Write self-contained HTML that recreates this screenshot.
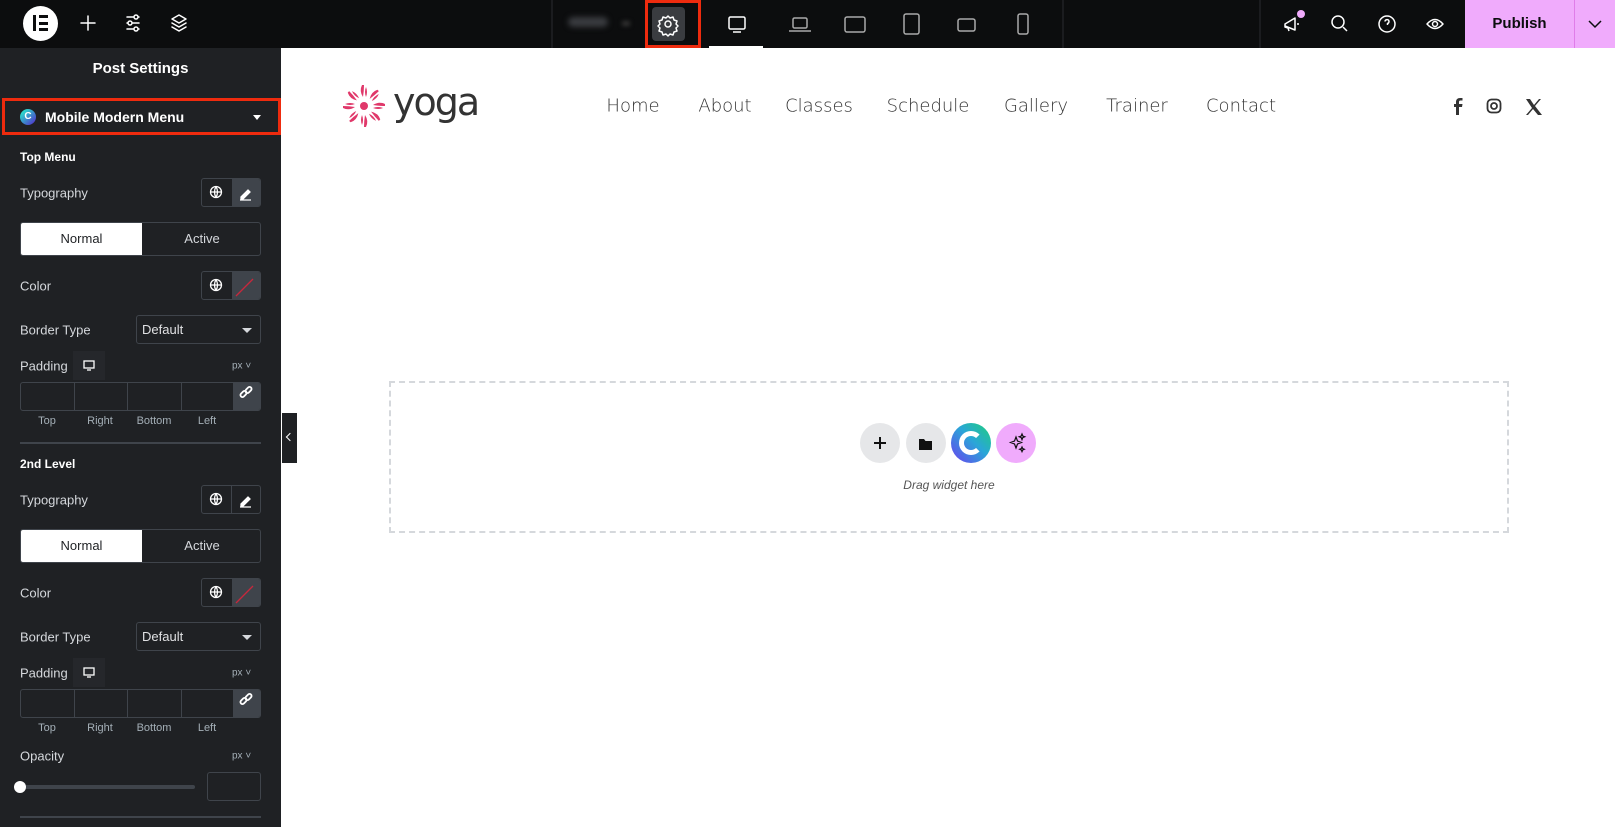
<!DOCTYPE html>
<html><head><meta charset="utf-8"><style>
*{margin:0;padding:0;box-sizing:border-box}
body{width:1615px;height:827px;overflow:hidden;background:#fff;font-family:"Liberation Sans",Arial,sans-serif;position:relative}
.a{position:absolute}
.top{left:0;top:0;width:1615px;height:48px;background:#0c0d0e}
.side{left:0;top:48px;width:281px;height:779px;background:#1f2124}
.t{color:#d5d8dc;font-size:13px;position:absolute;transform:translateY(-50%)}
.b{font-weight:bold;color:#fff}
.grp{position:absolute;left:201px;width:60px;height:29px;border:1px solid #3f444b;border-radius:3px;overflow:hidden}
.grp .r{position:absolute;left:30px;top:0;width:30px;height:100%;background:#3f444b}
.tabs{position:absolute;left:20px;width:241px;height:34px;border:1px solid #3f444b;border-radius:3px;overflow:hidden;font-size:13px;color:#d5d8dc}
.tabs .n{position:absolute;left:0;top:0;width:121px;height:100%;background:#fff;color:#1f2124;text-align:center;line-height:32px}
.tabs .ac{position:absolute;left:121px;top:0;width:120px;text-align:center;line-height:32px}
.sel{position:absolute;left:136px;width:125px;height:29px;border:1px solid #3f444b;border-radius:3px;color:#e0e1e3;font-size:13px;line-height:27px;padding-left:5px}
.sel:after{content:"";position:absolute;right:8px;top:12px;border:5px solid transparent;border-top:5px solid #d5d8dc;border-bottom:0}
.inp{position:absolute;left:20px;width:241px;height:29px;border:1px solid #3f444b;border-radius:3px;overflow:hidden}
.inp i{position:absolute;top:0;height:100%;border-left:1px solid #3f444b}
.inp .lk{position:absolute;left:212px;top:0;width:29px;height:100%;background:#3f444b}
.lbl{position:absolute;font-size:11px;color:#a4afb7;transform:translate(-50%,-50%)}
.sep{position:absolute;left:20px;width:241px;height:2px;background:#3f444b}
.nav{position:absolute;top:106px;transform:translate(-50%,-50%);font-family:"DejaVu Sans","Liberation Sans",sans-serif;font-weight:300;font-size:18px;color:#333}
.cb{position:absolute;top:423px;width:40px;height:40px;border-radius:50%;background:#e6e7e9}
</style></head><body>
<div class="a top"></div>
<div class="a" style="left:23px;top:6px;width:35px;height:35px;border-radius:50%;background:#fff"></div>
<div class="a" style="left:33px;top:15px;width:3px;height:16px;background:#0c0d0e"></div>
<div class="a" style="left:39px;top:15px;width:9px;height:3px;background:#0c0d0e"></div>
<div class="a" style="left:39px;top:21.5px;width:9px;height:3px;background:#0c0d0e"></div>
<div class="a" style="left:39px;top:28px;width:9px;height:3px;background:#0c0d0e"></div>
<svg class="a" style="left:0;top:0" width="1615" height="48" fill="none" stroke="#fff" stroke-width="1.5" stroke-linecap="round" stroke-linejoin="round">
<path d="M88 16v14M81 23h14"/>
<path d="M127 17h12M127 23h12M127 29h12"/><circle cx="136" cy="17" r="2" fill="#0c0d0e"/><circle cx="130" cy="23" r="2" fill="#0c0d0e"/><circle cx="136" cy="29" r="2" fill="#0c0d0e"/>
<path d="M179 15l-7 4 7 4 7-4zM172 23l7 4 7-4M172 27l7 4 7-4"/>
<line x1="552" y1="0" x2="552" y2="48" stroke="#2a2c30" stroke-width="1"/>
<line x1="1063" y1="0" x2="1063" y2="48" stroke="#2a2c30" stroke-width="1"/>
<line x1="1260" y1="0" x2="1260" y2="48" stroke="#2a2c30" stroke-width="1"/>
</svg>
<div class="a" style="left:568px;top:17px;width:40px;height:10px;border-radius:5px;background:#3a3c40;filter:blur(3px)"></div>
<div class="a" style="left:622px;top:21px;width:8px;height:5px;background:#333;filter:blur(2px)"></div>
<div class="a" style="left:645px;top:0;width:56px;height:48px;border:3px solid #ee2b0e"></div>
<div class="a" style="left:652px;top:7px;width:33px;height:34px;border-radius:4px;background:#3a3c40"></div>
<svg class="a" style="left:0;top:0" width="1615" height="48" fill="none" stroke="#fff" stroke-width="1.5" stroke-linejoin="round">
<circle cx="668" cy="24" r="3"/><path d="M668 16l2 2 3-1 1 3 3 1-1 3 2 2-2 2 1 3-3 1-1 3-3-1-2 2-2-2-3 1-1-3-3-1 1-3-2-2 2-2-1-3 3-1 1-3 3 1z"/>
<rect x="729" y="17" width="16" height="12" rx="1.5"/><path d="M733 32h8"/>
<g stroke="#aaa"><rect x="793" y="18" width="14" height="10" rx="1.5"/><path d="M789 31h22"/>
<rect x="845" y="17" width="20" height="15" rx="2"/>
<rect x="904" y="14" width="15" height="20" rx="2"/>
<rect x="958" y="19" width="17" height="12" rx="2"/>
<rect x="1018" y="14" width="10" height="20" rx="2"/></g>
<path d="M1285 24l10-6v12l-10-4zM1285 24v3l3 1 1 3M1297 24h2"/>
<circle cx="1338" cy="22" r="6"/><path d="M1343 27l4 4"/>
<circle cx="1387" cy="24" r="8"/><path d="M1385 21.5a2 2 0 1 1 2.5 2v1.5"/>
<path d="M1427 24q8-9 16 0q-8 9-16 0z"/><circle cx="1435" cy="24" r="2.5"/>
</svg>
<div class="a" style="left:709px;top:46px;width:54px;height:2px;background:#fff"></div>
<div class="a" style="left:1297px;top:10px;width:8px;height:8px;border-radius:50%;background:#f0abfc"></div>
<div class="a" style="left:1465px;top:0;width:150px;height:48px;background:#f0abfc"></div>
<div class="a" style="left:1574px;top:0;width:1px;height:48px;background:#e07de9"></div>
<div class="a" style="left:1465px;top:0;width:109px;height:48px;line-height:48px;text-align:center;font-size:15px;font-weight:bold;color:#0c0d0e">Publish</div>
<svg class="a" style="left:1575px;top:0" width="40" height="48" fill="none" stroke="#0c0d0e" stroke-width="1.5"><path d="M14 21l6 6 6-6"/></svg>

<div class="a side"></div>
<div class="a b" style="left:0;top:60px;width:281px;text-align:center;font-size:15px">Post Settings</div>
<div class="a" style="left:2px;top:98px;width:279px;height:37px;border:3px solid #ee2b0e"></div>
<div class="a" style="left:20px;top:109px;width:16px;height:16px;border-radius:50%;background:linear-gradient(135deg,#2fc,#52c);color:#fff;font-size:10px;font-weight:bold;text-align:center;line-height:16px">C</div>
<div class="t b" style="left:45px;top:117px;font-size:14px">Mobile Modern Menu</div>
<div class="a" style="left:253px;top:115px;border:4px solid transparent;border-top:5px solid #fff"></div>

<div class="t b" style="left:20px;top:157px;font-size:12px">Top Menu</div>
<div class="t" style="left:20px;top:193px">Typography</div>
<div class="grp" style="top:178px"><div class="r"></div></div>
<div class="tabs" style="top:222px"><div class="n">Normal</div><div class="ac">Active</div></div>
<div class="t" style="left:20px;top:286px">Color</div>
<div class="grp" style="top:271px"><div class="r"></div></div>
<div class="t" style="left:20px;top:330px">Border Type</div>
<div class="sel" style="top:315px">Default</div>
<div class="t" style="left:20px;top:366px">Padding</div>
<div class="a" style="left:73px;top:351px;width:32px;height:29px;background:#25272b"></div>
<div class="t" style="left:232px;top:366px;font-size:10px;color:#a4afb7">px ˅</div>
<div class="inp" style="top:382px"><i style="left:53px"></i><i style="left:106px"></i><i style="left:160px"></i><div class="lk"></div></div>
<div class="lbl" style="left:47px;top:421px">Top</div><div class="lbl" style="left:100px;top:421px">Right</div><div class="lbl" style="left:154px;top:421px">Bottom</div><div class="lbl" style="left:207px;top:421px">Left</div>
<div class="sep" style="top:442px"></div>

<div class="t b" style="left:20px;top:464px;font-size:12px">2nd Level</div>
<div class="t" style="left:20px;top:500px">Typography</div>
<div class="grp" style="top:485px"></div><div class="a" style="left:231px;top:485px;width:1px;height:29px;background:#3f444b"></div>
<div class="tabs" style="top:529px"><div class="n">Normal</div><div class="ac">Active</div></div>
<div class="t" style="left:20px;top:593px">Color</div>
<div class="grp" style="top:578px"><div class="r"></div></div>
<div class="t" style="left:20px;top:637px">Border Type</div>
<div class="sel" style="top:622px">Default</div>
<div class="t" style="left:20px;top:673px">Padding</div>
<div class="a" style="left:73px;top:658px;width:32px;height:29px;background:#25272b"></div>
<div class="t" style="left:232px;top:673px;font-size:10px;color:#a4afb7">px ˅</div>
<div class="inp" style="top:689px"><i style="left:53px"></i><i style="left:106px"></i><i style="left:160px"></i><div class="lk"></div></div>
<div class="lbl" style="left:47px;top:728px">Top</div><div class="lbl" style="left:100px;top:728px">Right</div><div class="lbl" style="left:154px;top:728px">Bottom</div><div class="lbl" style="left:207px;top:728px">Left</div>
<div class="t" style="left:20px;top:756px">Opacity</div>
<div class="t" style="left:232px;top:756px;font-size:10px;color:#a4afb7">px ˅</div>
<div class="a" style="left:20px;top:785px;width:175px;height:4px;border-radius:2px;background:#3f444b"></div>
<div class="a" style="left:14px;top:781px;width:12px;height:12px;border-radius:50%;background:#fff"></div>
<div class="a" style="left:207px;top:772px;width:54px;height:29px;border:1px solid #3f444b;border-radius:3px"></div>
<div class="sep" style="top:816px"></div>

<svg class="a" style="left:0;top:0" width="281" height="827" fill="none" stroke="#fff" stroke-width="1.3">
<g id="gl"><circle cx="216" cy="192" r="5.5"/><path d="M210.5 192h11M216 186.5q-3 5.5 0 11M216 186.5q3 5.5 0 11"/></g>
<use href="#gl" y="93"/><use href="#gl" y="307"/><use href="#gl" y="400"/>
<path d="M241 197l7-7 2 2-7 7h-2zM240 200h11" fill="#fff"/><path d="M241 504l7-7 2 2-7 7h-2zM240 507h11" fill="#fff"/>
<rect x="236" y="280" width="16" height="16" fill="#3f444b" stroke="none"/><path d="M236 296l17-17" stroke="#c7283c"/>
<rect x="236" y="587" width="16" height="16" fill="#3f444b" stroke="none"/><path d="M236 603l17-17" stroke="#c7283c"/>
<rect x="84" y="361" width="10" height="7"/><path d="M87 370h4"/>
<rect x="84" y="668" width="10" height="7"/><path d="M87 677h4"/>
<g stroke-width="1.8"><rect x="240" y="392" width="7" height="4" rx="2" transform="rotate(-45 243.5 394)"/><rect x="245" y="388" width="7" height="4" rx="2" transform="rotate(-45 248.5 390)"/>
<rect x="240" y="699" width="7" height="4" rx="2" transform="rotate(-45 243.5 701)"/><rect x="245" y="695" width="7" height="4" rx="2" transform="rotate(-45 248.5 697)"/></g>
</svg>

<div class="a" style="left:282px;top:413px;width:15px;height:50px;background:#1f2124"></div>
<div class="a" style="left:287px;top:434px;width:6px;height:6px;border-left:1.5px solid #fff;border-bottom:1.5px solid #fff;transform:rotate(45deg)"></div>
<svg class="a" style="left:340px;top:83px" width="48" height="48">
<g fill="#e0386a"><circle cx="24" cy="23" r="4"/>
<g id="pt"><path d="M22 2q-3 6 1 12q1-6 1-12zM26 4q-2 5 0 10q2-5 0-10z"/></g>
<use href="#pt" transform="rotate(45 24 23)"/><use href="#pt" transform="rotate(90 24 23)"/><use href="#pt" transform="rotate(135 24 23)"/><use href="#pt" transform="rotate(180 24 23)"/><use href="#pt" transform="rotate(225 24 23)"/><use href="#pt" transform="rotate(270 24 23)"/><use href="#pt" transform="rotate(315 24 23)"/></g>
</svg>
<div class="a" style="left:393px;top:80px;font-family:'DejaVu Sans','Liberation Sans',sans-serif;font-size:38px;color:#333;letter-spacing:-2px">yoga</div>
<div class="nav" style="left:633px">Home</div>
<div class="nav" style="left:725px">About</div>
<div class="nav" style="left:819px">Classes</div>
<div class="nav" style="left:928px">Schedule</div>
<div class="nav" style="left:1036px">Gallery</div>
<div class="nav" style="left:1137px">Trainer</div>
<div class="nav" style="left:1241px">Contact</div>
<svg class="a" style="left:1448px;top:96px" width="100" height="20">
<path d="M11 19v-8h3l.5-3H11V6c0-1 .5-1.5 1.5-1.5H14.5V2h-2.5C9.5 2 8 3.5 8 6v2H6v3h2v8z" fill="#333"/>
<g fill="none" stroke="#333" stroke-width="1.8"><rect x="39.5" y="3.5" width="13" height="13" rx="4"/><circle cx="46" cy="10" r="3"/></g>
<path d="M78 3h4l4 6 5-6h2l-6 7 7 9h-4l-5-6-5 6h-2l6-7z" fill="#333"/>
</svg>
<div class="a" style="left:389px;top:381px;width:1120px;height:152px;border:2px dashed #d5d8dc"></div>
<div class="cb" style="left:860px"></div><div class="cb" style="left:906px"></div>
<div class="cb" style="left:951px;background:linear-gradient(45deg,#6b3ff0,#2aa6d8 55%,#1ed07a)"></div>
<div class="cb" style="left:996px;background:#f0abfc"></div>
<svg class="a" style="left:860px;top:423px" width="180" height="40">
<path d="M20 14v12M14 20h12" stroke="#111" stroke-width="2"/>
<path d="M59 16h5l1.5 2h6.5v9h-13z" fill="#111"/>
<path d="M156 14l1.5 4 4 1.5-4 1.5-1.5 4-1.5-4-4-1.5 4-1.5zM162 11l.8 2 2 .8-2 .8-.8 2-.8-2-2-.8 2-.8zM162 24l.7 1.6 1.6.7-1.6.7-.7 1.6-.7-1.6-1.6-.7 1.6-.7z" fill="none" stroke="#111" stroke-width="1.2"/>
</svg>
<div class="a" style="left:959px;top:431px;width:24px;height:24px;border:5px solid #fff;border-right-color:transparent;border-radius:50%"></div>
<div class="a" style="left:389px;top:478px;width:1120px;text-align:center;font-size:12px;font-style:italic;color:#555">Drag widget here</div>
</body></html>
